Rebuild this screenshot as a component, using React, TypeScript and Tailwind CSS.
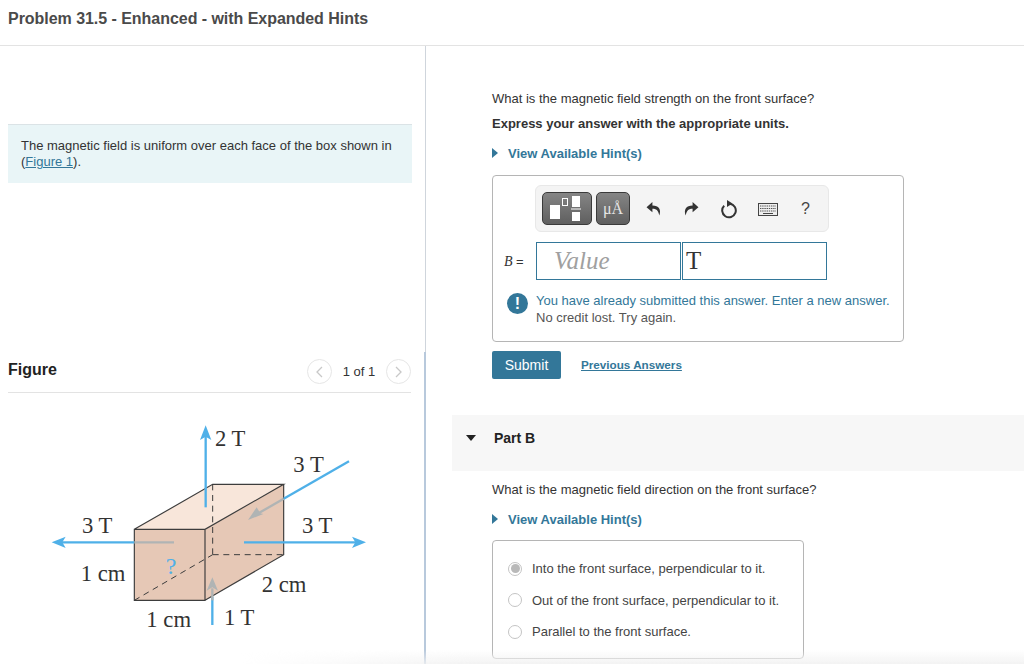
import React from "react";

const Hints = () => (
  <div className="flex items-center h-[18px] text-[#337799] text-[13px] font-bold">
    <svg width="6" height="10" viewBox="0 0 6 10" className="mr-[10px] mb-[2px]"><path d="M0 0L6 5L0 10Z" fill="#337799" /></svg>
    <span>View Available Hint(s)</span>
  </div>
);

const Figure = () => (
  <svg width="430" height="264" viewBox="0 0 1290 792" className="block">
    <polygon points="403,388 638,253 851,253 615,388" fill="#f8e6da" />
    <polygon points="615,388 851,253 851,464 615,601" fill="#e6c8b6" />
    <rect x="403" y="388" width="212" height="213" fill="#e6c8b6" />
    <g stroke="#3d3d3d" strokeWidth="3.5" fill="none">
      <path d="M403 388L638 253H851L615 388H403V601H615V388M851 253V464L615 601" />
      <path d="M638 253V470M638 464H851M403 601L638 464" strokeDasharray="18 14" strokeWidth="3" />
    </g>
    <g stroke="#4fb0e8" strokeWidth="7" fill="none">
      <path d="M617 322V105" />
      <path d="M1047 184L851 296" />
      <path d="M403 427H180" />
      <path d="M732 427H1070" />
      <path d="M637 675V590" />
    </g>
    <g stroke="#b0b4b4" strokeWidth="7" fill="none">
      <path d="M851 296L770 343" />
      <path d="M403 427H522" />
      <path d="M637 601V565" />
    </g>
    <g fill="#4fb0e8">
      <polygon points="617,76 634,120 617,110 600,120" />
      <polygon points="155,427 197,410 187,427 197,444" />
      <polygon points="1098,427 1056,410 1066,427 1056,444" />
    </g>
    <g fill="#b0b4b4">
      <polygon points="744,360 770,322 781,340 790,342" />
      <polygon points="637,532 654,572 637,562 620,572" />
    </g>
    <g fontFamily="'Liberation Serif', serif" fontSize="68" fill="#333333">
      <text x="645" y="139">2 T</text>
      <text x="880" y="216">3 T</text>
      <text x="246" y="398">3 T</text>
      <text x="906" y="398">3 T</text>
      <text x="242" y="542">1 cm</text>
      <text x="785" y="577">2 cm</text>
      <text x="439" y="682">1 cm</text>
      <text x="672" y="675">1 T</text>
    </g>
    <text x="497" y="521" fontFamily="'Liberation Serif', serif" fontSize="72" fill="#4fb0e8">?</text>
  </svg>
);

const Radio = ({ label, selected }: { label: string; selected?: boolean }) => (
  <div className="flex items-center h-[31.5px]">
    <span className="w-[14px] h-[14px] rounded-full border border-[#c4c4c4] bg-white flex items-center justify-center mr-[10px] ml-[15px]">
      {selected && <span className="w-[9px] h-[9px] rounded-full bg-[#b9b9b9]" />}
    </span>
    <span className="text-[13px] text-[#444444]">{label}</span>
  </div>
);

export default function App() {
  return (
    <div className="relative w-[1024px] h-[664px] overflow-hidden bg-white text-[13px] text-[#333333]" style={{ fontFamily: "'Liberation Sans', Arial, sans-serif" }}>
      <header className="h-[46px] border-b border-[#e3e3e3] pl-[8px] pt-[9px]">
        <h1 className="text-[16px] leading-[20px] font-bold text-[#4a4a4a] tracking-[-0.04px]">Problem 31.5 - Enhanced - with Expanded Hints</h1>
      </header>
      <div className="flex h-[618px]">
        <aside className="w-[426px] shrink-0 flex flex-col">
          <div className="h-[306px] w-[425.5px] border-r border-[#cfd5dc] pl-[8px] pr-[13px] pt-[78px]">
            <div className="h-[59px] bg-[#e9f5f7] border-t border-[#dbe3e6] pl-[13px] pt-[13px] pr-[8px] text-[13px] leading-[16px] text-[#333333]">
              The magnetic field is uniform over each face of the box shown in<br />(<span className="text-[#337799] underline">Figure 1</span>).
            </div>
          </div>
          <div className="flex-1 border-r-2 border-[#b8c9dc] relative">
            <div className="ml-[8px] mr-[13px] h-[41px] border-b border-[#e3e3e3] flex items-center justify-between">
              <span className="text-[16px] font-bold text-[#222222] mb-[5px]">Figure</span>
              <div className="flex items-center mb-[1px]">
                <span className="w-[25px] h-[25px] rounded-full border border-[#e6e6e6] flex items-center justify-center">
                  <svg width="7" height="12" viewBox="0 0 7 12"><path d="M6 1L1 6L6 11" stroke="#c8c8c8" strokeWidth="1.3" fill="none" /></svg>
                </span>
                <span className="w-[54px] text-center text-[13px] text-[#333333]">1 of 1</span>
                <span className="w-[25px] h-[25px] rounded-full border border-[#e6e6e6] flex items-center justify-center">
                  <svg width="7" height="12" viewBox="0 0 7 12"><path d="M1 1L6 6L1 11" stroke="#c8c8c8" strokeWidth="1.3" fill="none" /></svg>
                </span>
              </div>
            </div>
            <div className="mt-[7px]"><Figure /></div>
          </div>
        </aside>
        <main className="flex-1 flex flex-col">
          <div className="pl-[66px] pt-[45px] flex flex-col">
            <p className="h-[18px] leading-[16px] text-[13px] text-[#333333]">What is the magnetic field strength on the front surface?</p>
            <p className="h-[18px] mt-[7px] leading-[16px] text-[13px] font-bold text-[#333333]">Express your answer with the appropriate units.</p>
            <div className="mt-[11px]"><Hints /></div>
            <div className="mt-[12px] w-[412px] h-[167px] border border-[#b5b5b5] rounded-[4px] relative">
              <div className="ml-[42px] mt-[9px] w-[294px] h-[47px] bg-[#f4f4f4] border border-[#e8e8e8] rounded-[6px] flex items-center pl-[6px]">
                <div className="w-[50px] h-[33px] rounded-[5px] border border-[#3a3a3a] bg-gradient-to-b from-[#858585] to-[#5f5f5f] flex items-center justify-center">
                  <svg width="48" height="31" viewBox="0 0 48 31">
                    <rect x="7" y="12" width="10" height="14" fill="#fff" />
                    <rect x="19.5" y="5.5" width="5" height="7" fill="none" stroke="#fff" />
                    <rect x="29" y="3" width="8" height="11" fill="#fff" />
                    <rect x="28" y="15.5" width="10" height="1" fill="#fff" />
                    <rect x="29" y="19" width="8" height="9" fill="#fff" />
                  </svg>
                </div>
                <div className="ml-[4px] w-[34px] h-[33px] rounded-[5px] border border-[#3a3a3a] bg-gradient-to-b from-[#858585] to-[#5f5f5f] flex items-center justify-center text-[#e4e4e4] text-[16px]" style={{ fontFamily: "'Liberation Serif', serif" }}>μÅ</div>
                <svg width="16" height="16" viewBox="0 0 15 15" className="ml-[16px]"><path d="M6 1L0.5 5.8L6 10.5V7.2C9.5 7.2 11.5 8.5 12.5 13.5C14.5 8 12 4.2 6 4.2Z" fill="#333" /></svg>
                <svg width="16" height="16" viewBox="0 0 15 15" className="ml-[21px]"><path d="M9 1L14.5 5.8L9 10.5V7.2C5.5 7.2 3.5 8.5 2.5 13.5C0.5 8 3 4.2 9 4.2Z" fill="#333" /></svg>
                <svg width="18" height="20" viewBox="0 0 18 20" className="ml-[21px]"><path d="M10 4.8A6.8 6.8 0 1 1 4.2 6.7" stroke="#333" strokeWidth="2" fill="none" /><path d="M7 1L12.5 4.6L7 8Z" fill="#333" /></svg>
                <svg width="20" height="13" viewBox="0 0 20 13" className="ml-[20px] mt-[2px]"><rect x="0.5" y="0.5" width="19" height="12" fill="#eee" stroke="#444" /><path d="M2 3H18M2 5.5H18M2 8H18" stroke="#555" strokeDasharray="1.4 .8" /><path d="M5 10.5H15" stroke="#444" /></svg>
                <span className="ml-[23px] text-[16px] text-[#444444]">?</span>
              </div>
              <div className="flex items-center mt-[10px] ml-[11px]">
                <span className="w-[32px] text-[14px] text-[#333333]" style={{ fontFamily: "'Liberation Serif', serif" }}><i>B</i> <span className="text-[13px]" style={{ fontFamily: "'Liberation Sans', sans-serif" }}>=</span></span>
                <div className="w-[145px] h-[38px] border border-[#337799] flex items-center pl-[17px] text-[25px] italic text-[#a0a0a0]" style={{ fontFamily: "'Liberation Serif', serif" }}>Value</div>
                <div className="ml-[1px] w-[145px] h-[38px] border border-[#337799] flex items-center pl-[3px] text-[25px] text-[#333333]" style={{ fontFamily: "'Liberation Serif', serif" }}>T</div>
              </div>
              <div className="flex mt-[12px] ml-[14px]">
                <span className="w-[21px] h-[21px] rounded-full bg-[#337799] text-white font-bold text-[16px] flex items-center justify-center shrink-0 mt-[1px]">!</span>
                <div className="ml-[8px] text-[13px] leading-[17px]">
                  <div className="text-[#337799]">You have already submitted this answer. Enter a new answer.</div>
                  <div className="text-[#555555]">No credit lost. Try again.</div>
                </div>
              </div>
            </div>
            <div className="flex items-center mt-[9px]">
              <button className="w-[69px] h-[28px] rounded-[2px] bg-[#337799] text-white text-[14px]">Submit</button>
              <span className="ml-[20px] text-[11.7px] font-bold text-[#337799] underline">Previous Answers</span>
            </div>
          </div>
          <section className="ml-[26px] mt-[36px] h-[56px] bg-[#f7f7f7] flex items-start pt-[14px]">
            <svg width="10" height="6" viewBox="0 0 10 6" className="ml-[14px] mt-[6px]"><path d="M0 0H10L5 6Z" fill="#222" /></svg>
            <span className="ml-[18px] text-[14px] leading-[18px] font-bold text-[#222222]">Part B</span>
          </section>
          <div className="pl-[66px] pt-[11px] flex flex-col">
            <p className="h-[18px] leading-[16px] text-[13px] text-[#333333]">What is the magnetic field direction on the front surface?</p>
            <div className="mt-[11px]"><Hints /></div>
            <div className="mt-[11px] w-[312px] h-[119px] border border-[#b5b5b5] rounded-[4px] pt-[12px]">
              <Radio selected label="Into the front surface, perpendicular to it." />
              <Radio label="Out of the front surface, perpendicular to it." />
              <Radio label="Parallel to the front surface." />
            </div>
          </div>
        </main>
      </div>
      <div className="absolute left-[240px] right-0 bottom-0 h-[14px] bg-gradient-to-b from-transparent to-[#f3f3f3] pointer-events-none [mask-image:linear-gradient(to_right,transparent,black_30%)]" />
    </div>
  );
}
